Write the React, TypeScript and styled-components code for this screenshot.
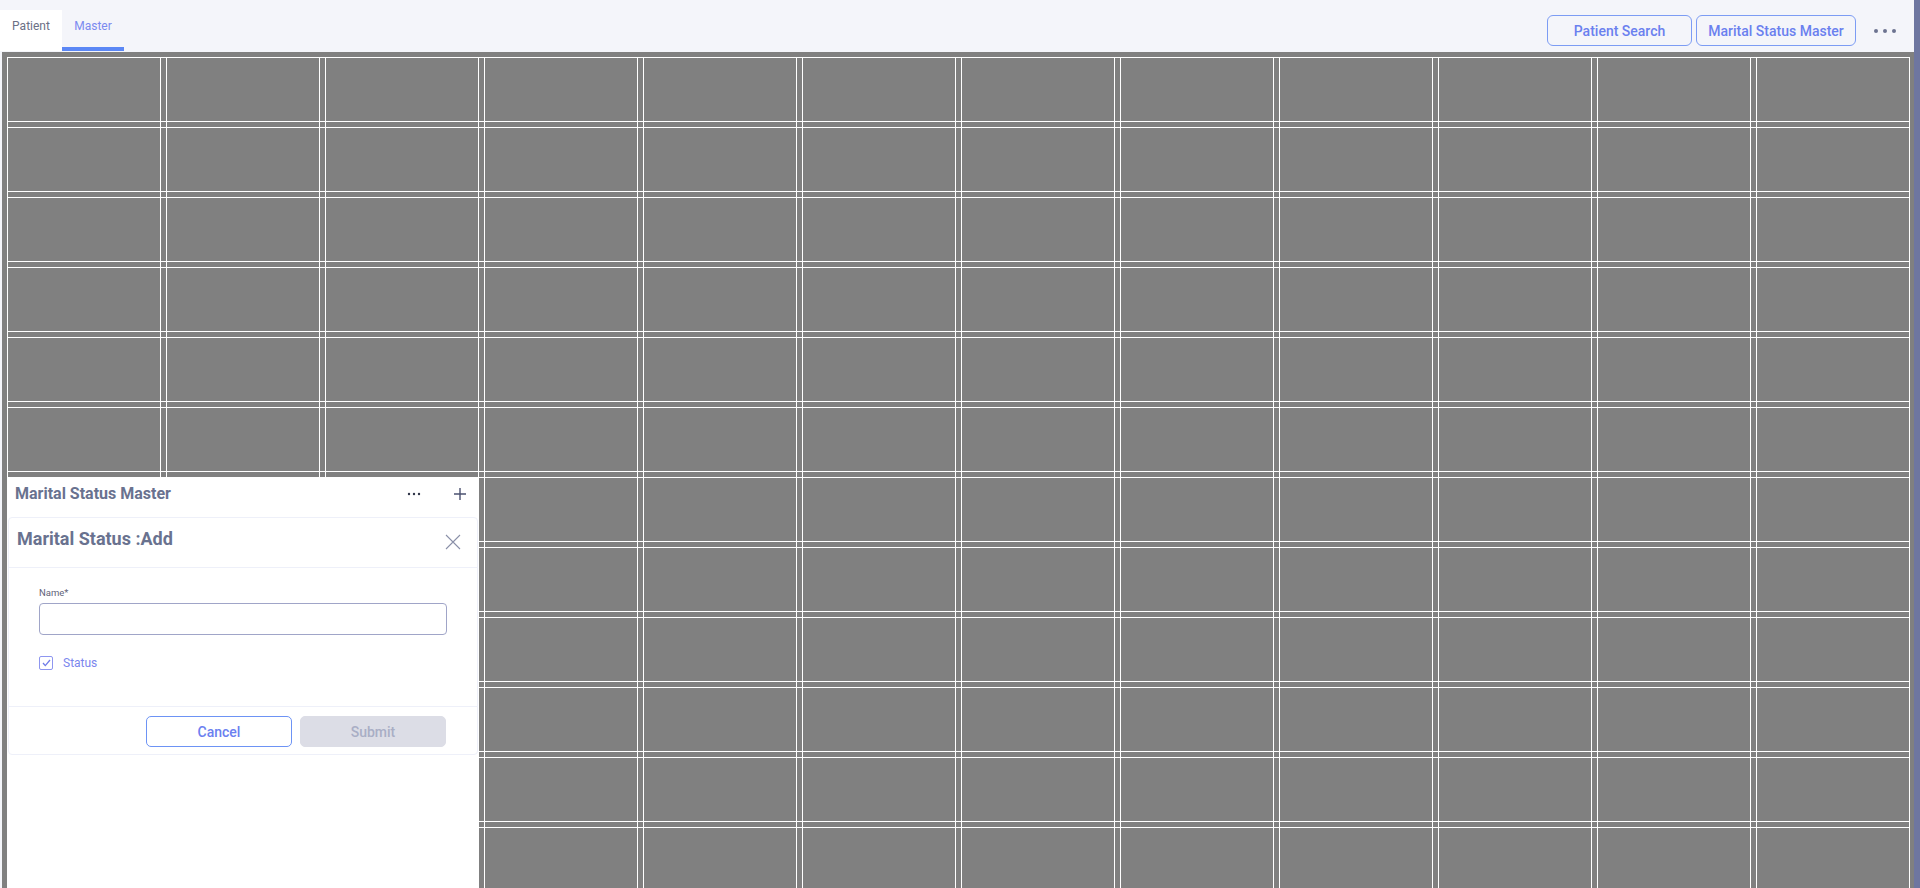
import React, { useState } from 'react'
import styled, { createGlobalStyle } from 'styled-components'

const GlobalStyle = createGlobalStyle`
  html, body {
    margin: 0;
    padding: 0;
    height: 888px;
    overflow: hidden;
    font-family: Roboto, "Liberation Sans", Arial, sans-serif;
  }
  * { box-sizing: border-box; }
`

const ROWS = 13
const COLS = 12

const Page = styled.div`
  display: grid;
  grid-template-columns: 1fr 6px;
  height: 888px;
  overflow: hidden;
`

const Main = styled.div`
  display: flex;
  flex-direction: column;
  background: #f4f5fa;
  min-width: 0;
`

const ScrollStrip = styled.div`
  background: #6e76a0;
`

const TopBar = styled.div`
  height: 52px;
  display: flex;
  align-items: flex-start;
  justify-content: space-between;
  flex-shrink: 0;
`

const Tabs = styled.div`
  display: flex;
  padding-top: 10px;
`

const Tab = styled.div<{ $active?: boolean; $plain?: boolean }>`
  height: 41px;
  width: 62px;
  display: flex;
  align-items: center;
  justify-content: center;
  padding-bottom: 6px;
  font-size: 12px;
  color: ${({ $active }) => ($active ? '#7b8af0' : '#6b7085')};
  background: ${({ $plain }) => ($plain ? '#ffffff' : 'transparent')};
  border-bottom: 4px solid ${({ $active }) => ($active ? '#5b87f5' : 'transparent')};
  cursor: pointer;
`

const Actions = styled.div`
  display: flex;
  align-items: center;
  gap: 4px;
  padding-top: 15px;
  padding-right: 18px;
`

const OutlineButton = styled.button<{ $w: number }>`
  height: 31px;
  width: ${({ $w }) => $w}px;
  border: 1px solid #7c9cf4;
  border-radius: 6px;
  background: transparent;
  color: #6a80ef;
  font-family: Roboto, "Liberation Sans", Arial, sans-serif;
  font-size: 14px;
  font-weight: 500;
  cursor: pointer;
`

const MoreDots = styled.div`
  display: flex;
  gap: 5px;
  margin-left: 14px;
  span {
    width: 4px;
    height: 4px;
    border-radius: 50%;
    background: #6c7390;
  }
`

const Board = styled.div`
  flex: 1;
  margin-left: 2px;
  background: #808080;
  padding: 5px 4px 0 5px;
  display: grid;
  grid-template-columns: repeat(${COLS}, 1fr);
  grid-template-rows: repeat(${ROWS}, 65px);
  gap: 5px;
  overflow: hidden;
`

// full-width pair of guide lines for one grid row
const RowGuide = styled.div<{ $row: number }>`
  grid-row: ${({ $row }) => $row};
  grid-column: 1 / -1;
  border-top: 1px solid #ffffff;
  border-bottom: 1px solid #ffffff;
`

// full-height pair of guide lines for one grid column
const ColGuide = styled.div<{ $col: number }>`
  grid-column: ${({ $col }) => $col};
  grid-row: 1 / -1;
  border-left: 1px solid #ffffff;
  border-right: 1px solid #ffffff;
`

const Widget = styled.div`
  grid-column: 1 / span 3;
  grid-row: 7 / span 7;
  background: #ffffff;
  display: flex;
  flex-direction: column;
  z-index: 1;
`

const WidgetHead = styled.div`
  height: 40px;
  display: flex;
  align-items: flex-start;
  padding: 7px 12px 0 8px;
`

const WidgetTitle = styled.div`
  flex: 1;
  font-size: 16px;
  font-weight: 700;
  color: #69728f;
`

const IconBtn = styled.button<{ $ml?: number; $mt?: number }>`
  border: 0;
  background: transparent;
  padding: 0;
  margin-left: ${({ $ml }) => $ml ?? 0}px;
  margin-top: ${({ $mt }) => $mt ?? 0}px;
  display: flex;
  align-items: center;
  justify-content: center;
  cursor: pointer;
`

const FormCard = styled.div`
  margin: 0 1px;
  border: 1px solid #eef0f9;
  border-radius: 4px;
`

const FormHead = styled.div`
  height: 50px;
  display: flex;
  align-items: flex-start;
  justify-content: space-between;
  padding: 10px 16px 0 8px;
  border-bottom: 1px solid #eef0f9;
`

const FormTitle = styled.div`
  font-size: 18px;
  font-weight: 700;
  color: #69728f;
`

const FormBody = styled.div`
  padding: 19px 30px 36px 30px;
  border-bottom: 1px solid #eef0f9;
`

const Label = styled.label`
  display: block;
  font-size: 9.5px;
  color: #5f6478;
  margin-bottom: 5px;
`

const Input = styled.input`
  display: block;
  width: 100%;
  height: 32px;
  border: 1px solid #a0a5c8;
  border-radius: 4px;
  outline: none;
  padding: 0 8px;
  font-family: inherit;
  font-size: 13px;
`

const CheckRow = styled.label`
  display: flex;
  align-items: center;
  gap: 10px;
  margin-top: 21px;
  font-size: 12px;
  color: #7b86ee;
  cursor: pointer;
`

const CheckBox = styled.span`
  width: 14px;
  height: 14px;
  border: 1.5px solid #8e96f0;
  border-radius: 2px;
  display: flex;
  align-items: center;
  justify-content: center;
`

const FormFoot = styled.div`
  display: flex;
  justify-content: flex-end;
  gap: 8px;
  padding: 9px 31px 7px 0;
`

const FootButton = styled.button<{ $primary?: boolean }>`
  width: 146px;
  height: 31px;
  border-radius: 5px;
  font-family: Roboto, "Liberation Sans", Arial, sans-serif;
  font-size: 14px;
  font-weight: 500;
  cursor: pointer;
  border: 1px solid ${({ $primary }) => ($primary ? '#dcdde6' : '#6d93f5')};
  background: ${({ $primary }) => ($primary ? '#dcdde6' : '#ffffff')};
  color: ${({ $primary }) => ($primary ? '#a9aec5' : '#6b80f0')};
`

const rows = Array.from({ length: ROWS }, (_, i) => i + 1)
const cols = Array.from({ length: COLS }, (_, i) => i + 1)

export default function App() {
  const [active, setActive] = useState(true)
  const [name, setName] = useState('')

  return (
    <Page>
      <GlobalStyle />
      <Main>
        <TopBar>
          <Tabs>
            <Tab $plain>Patient</Tab>
            <Tab $active>Master</Tab>
          </Tabs>
          <Actions>
            <OutlineButton $w={145}>Patient Search</OutlineButton>
            <OutlineButton $w={160}>Marital Status Master</OutlineButton>
            <MoreDots>
              <span />
              <span />
              <span />
            </MoreDots>
          </Actions>
        </TopBar>
        <Board>
          {rows.map((r) => (
            <RowGuide key={'r' + r} $row={r} />
          ))}
          {cols.map((c) => (
            <ColGuide key={'c' + c} $col={c} />
          ))}
          <Widget>
            <WidgetHead>
              <WidgetTitle>Marital Status Master</WidgetTitle>
              <IconBtn aria-label="more" $mt={8}>
                <svg width="14" height="4" viewBox="0 0 14 4">
                  <circle cx="2" cy="2" r="1.2" fill="#2f3447" />
                  <circle cx="7" cy="2" r="1.2" fill="#2f3447" />
                  <circle cx="12" cy="2" r="1.2" fill="#2f3447" />
                </svg>
              </IconBtn>
              <IconBtn aria-label="add" $ml={32} $mt={3}>
                <svg width="14" height="14" viewBox="0 0 14 14">
                  <path d="M7 1v12M1 7h12" stroke="#4b5170" strokeWidth="1.4" fill="none" />
                </svg>
              </IconBtn>
            </WidgetHead>
            <FormCard>
              <FormHead>
                <FormTitle>Marital Status :Add</FormTitle>
                <IconBtn aria-label="close" $mt={6}>
                  <svg width="16" height="16" viewBox="0 0 16 16">
                    <path d="M1 1l14 14M15 1L1 15" stroke="#8a90a8" strokeWidth="1.1" fill="none" />
                  </svg>
                </IconBtn>
              </FormHead>
              <FormBody>
                <Label>Name*</Label>
                <Input value={name} onChange={(e) => setName(e.target.value)} />
                <CheckRow onClick={() => setActive(!active)}>
                  <CheckBox>
                    {active && (
                      <svg width="9" height="8" viewBox="0 0 9 8">
                        <path d="M1 4l2.3 2.6L8 1" stroke="#6f7be8" strokeWidth="1.3" fill="none" />
                      </svg>
                    )}
                  </CheckBox>
                  Status
                </CheckRow>
              </FormBody>
              <FormFoot>
                <FootButton>Cancel</FootButton>
                <FootButton $primary disabled>
                  Submit
                </FootButton>
              </FormFoot>
            </FormCard>
          </Widget>
        </Board>
      </Main>
      <ScrollStrip />
    </Page>
  )
}
